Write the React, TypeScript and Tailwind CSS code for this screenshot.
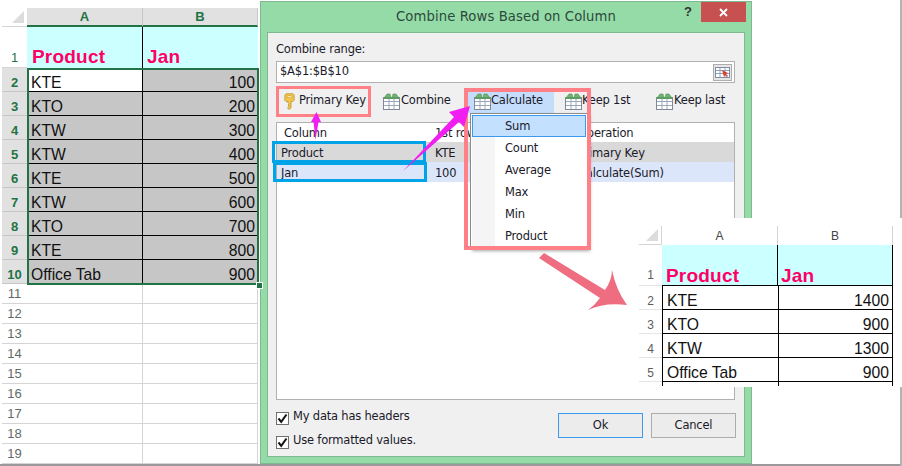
import { Fragment } from "react"

const uiFont = "font-['DejaVu_Sans',sans-serif] text-[11.5px] tracking-[-0.2px] whitespace-nowrap text-[#1a1a2a]"
const cellFont = "font-['Liberation_Sans',sans-serif] text-[15.700px] text-[#111]"
const headFont = "font-['Liberation_Sans',sans-serif] text-[19px] tracking-[0.2px] font-bold leading-none text-[#ff0066]"

const leftRows = [
  ["KTE", "100"],
  ["KTO", "200"],
  ["KTW", "300"],
  ["KTW", "400"],
  ["KTE", "500"],
  ["KTW", "600"],
  ["KTO", "700"],
  ["KTE", "800"],
  ["Office Tab", "900"],
]

const resultRows = [
  ["KTE", "1400"],
  ["KTO", "900"],
  ["KTW", "1300"],
  ["Office Tab", "900"],
]

const TableIcon = () => (
  <svg width="17" height="17" viewBox="0 0 17 17" className="shrink-0">
    <rect x="0.5" y="4.5" width="16" height="12" fill="#fff" stroke="#7d8a9c" />
    <path d="M1 8.5h15M1 12.5h15M6 5v11M11 5v11" stroke="#9aa8ba" fill="none" />
    <path d="M1 5 4 1h3l1 4zM9 5l1-4h3l3 4z" fill="#6fb46f" stroke="#4d8f55" strokeWidth="0.6" />
    <rect x="1" y="4" width="15" height="2" fill="#5d9c62" />
  </svg>
)

const KeyIcon = () => (
  <svg width="11" height="17" viewBox="0 0 13 22" className="shrink-0">
    <path
      d="M2 1h9l1.5 1.5v7L11 11H8.5v8L6 21.5 4.5 20v-1.5L6 17l-1.5-1.5L6 14l-1.5-1.5V11H2L.5 9.500v-7z"
      fill="#f3c64a"
      stroke="#b9902c"
    />
    <rect x="3.500" y="3.500" width="6" height="2.500" rx="1" fill="#fff3c0" stroke="#b9902c" strokeWidth="0.7" />
  </svg>
)

const Check = () => (
  <span className="w-[13px] h-[13px] border border-[#707070] bg-white flex items-center justify-center">
    <svg width="11" height="11" viewBox="0 0 11 11">
      <path d="M1.500 5.500 4.200 8.800 9.500 1.500" fill="none" stroke="#111" strokeWidth="2" />
    </svg>
  </span>
)

const Corner = () => (
  <div className="w-full h-full flex items-end justify-end pr-[3px] pb-[3px]">
    <div className="w-[12px] h-[12px] bg-[#dcdcdc] [clip-path:polygon(100%_0,100%_100%,0_100%)]" />
  </div>
)

function LeftSheet() {
  const colHead = "flex items-center justify-center bg-[#e1e1e1] border-r border-[#c6c6c6] font-['Liberation_Sans',sans-serif] text-[13px] font-bold text-[#217346]"
  const rowHead = "flex items-center justify-center pt-[6px] bg-[#e1e1e1] border-b border-[#c6c6c6] font-['Liberation_Sans',sans-serif] text-[13px] font-bold text-[#217346]"
  const plainHead = "flex items-center justify-center bg-white border-b border-[#d4d4d4] font-['Liberation_Sans',sans-serif] text-[13px] text-[#5f6b66]"
  return (
    <div className="w-[258px] pl-[2px] pt-[8px] shrink-0 h-[456px] relative">
      <div className="grid grid-cols-[25px_116px_115px] grid-rows-[19px_41px_repeat(9,24px)_repeat(9,20px)]">
        <div className="border-b border-[#d4d4d4]">
          <Corner />
        </div>
        <div className={colHead + " border-b-2 border-b-[#217346]"}>A</div>
        <div className={colHead + " border-b-2 border-b-[#217346]"}>B</div>

        <div className="flex items-end justify-center font-['Liberation_Sans',sans-serif] text-[13px] text-[#217346] border-b border-[#d4d4d4]">1</div>
        <div className={`bg-[#ccffff] border-r border-black flex items-end pl-[5px] pb-[2px] ${headFont}`}>Product</div>
        <div className={`bg-[#ccffff] flex items-end pl-[4px] pb-[2px] ${headFont}`}>Jan</div>

        {leftRows.map((row, i) => (
          <Fragment key={i}>
            <div className={rowHead}>{i + 2}</div>
            <div className={`${cellFont} ${i === 0 ? "bg-white" : "bg-[#c6c6c6]"} border-b border-r border-black flex items-center pl-[4px] pt-[7px]`}>{row[0]}</div>
            <div className={`${cellFont} bg-[#c6c6c6] border-b border-black flex items-center justify-end pr-[3px] pt-[7px]`}>{row[1]}</div>
          </Fragment>
        ))}

        {[11, 12, 13, 14, 15, 16, 17, 18, 19].map((n) => (
          <Fragment key={n}>
            <div className={plainHead}>{n}</div>
            <div className="border-b border-r border-[#d4d4d4]" />
            <div className="border-b border-r border-[#d4d4d4]" />
          </Fragment>
        ))}
      </div>
      <div className="absolute left-[27px] top-[68px] w-[232px] h-[217px] border-2 border-[#217346]" />
      <div className="absolute left-[256px] top-[282px] w-[5px] h-[5px] bg-[#217346] border border-white box-content" />
    </div>
  )
}

function ToolButton({ label, className }: { label: string; className: string }) {
  return (
    <div className={`flex items-center ${className}`}>
      <TableIcon />
      <span className={uiFont}>{label}</span>
    </div>
  )
}

function Dialog() {
  const listRow = "grid grid-cols-[151px_146px_1fr] items-center"
  return (
    <div className="ml-[2px] w-[492px] h-[463px] mt-[1px] bg-[#94dba7] border border-[#7fb98f] shrink-0 flex flex-col px-[6px] pb-[6px]">
      <div className="h-[30px] shrink-0 flex items-center relative">
        <span className="w-full text-center font-['DejaVu_Sans',sans-serif] text-[13.200px] text-[#2c4a3a] tracking-[0.1px]">Combine Rows Based on Column</span>
        <span className="absolute left-[417px] top-[0px] font-['Liberation_Sans',sans-serif] text-[13px] font-bold text-[#333]">?</span>
        <div className="absolute left-[434px] top-[0px] w-[45px] h-[20px] bg-[#c75050] flex items-center justify-center">
          <svg width="9" height="9" viewBox="0 0 9 9">
            <path d="M1 1 8 8M8 1 1 8" stroke="#fff" strokeWidth="1.800" />
          </svg>
        </div>
      </div>

      <div className="flex-1 bg-[#f0f0f0] border border-[#7fb98f] pl-[8px] pr-[9px] pt-[9px] flex flex-col">
        <div className={`${uiFont} leading-[14px] mb-[5px]`}>Combine range:</div>
        <div className="h-[22px] border border-[#b0b0b0] bg-white flex items-center justify-between pl-[3px] pr-[2px]">
          <span className={uiFont}>$A$1:$B$10</span>
          <div className="w-[19px] h-[17px] border border-[#adadad] bg-[#e6e6e6] flex items-center justify-center">
            <svg width="15" height="11" viewBox="0 0 15 11">
              <rect x="0.500" y="0.500" width="14" height="10" fill="#fff" stroke="#7d8fa5" />
              <path d="M1 3.500h13M1 6.500h13M5 1v9M10 1v9" stroke="#8da2bb" fill="none" />
              <path d="M7 3l6 3-2 1 2 2-1 1-2-2-1 2z" fill="#d8402c" />
            </svg>
          </div>
        </div>

        <div className="h-[36px] mb-[3px] shrink-0 flex items-center">
          <div className="w-[93px] flex items-center pl-[8px] gap-[4px]">
            <KeyIcon />
            <span className={uiFont}>Primary Key</span>
          </div>
          <ToolButton label="Combine" className="ml-[14px] w-[84px] gap-[1px]" />
          <div className="w-[87px] h-[23px] bg-[#c4ddfc] flex items-center pl-[7px]">
            <TableIcon />
            <span className={uiFont}>Calculate</span>
          </div>
          <ToolButton label="Keep 1st" className="ml-[11px] w-[91px]" />
          <ToolButton label="Keep last" className="gap-[1px]" />
        </div>

        <div className="h-[278px] border border-[#b0b0b0] bg-white">
          <div className={`h-[19px] pt-[2px] ${listRow}`}>
            <span className={`${uiFont} pl-[7px]`}>Column</span>
            <span className={`${uiFont} pl-[7px]`}>1st row</span>
            <span className={`${uiFont} pl-[4px]`}>Operation</span>
          </div>
          <div className={`h-[20px] pt-[3px] bg-[#d9d9d9] ${listRow}`}>
            <span className={`${uiFont} pl-[4px]`}>Product</span>
            <span className={`${uiFont} pl-[7px]`}>KTE</span>
            <span className={`${uiFont} pl-[4px]`}>Primary Key</span>
          </div>
          <div className={`h-[20px] pt-[3px] bg-[#dce6fa] ${listRow}`}>
            <span className={`${uiFont} pl-[4px]`}>Jan</span>
            <span className={`${uiFont} pl-[7px]`}>100</span>
            <span className={`${uiFont} pl-[4px]`}>Calculate(Sum)</span>
          </div>
        </div>

        <div className="flex-1 flex items-start justify-between pt-[12px]">
          <div className="flex flex-col gap-[11px]">
            <label className="flex items-center gap-[4px] h-[13px]">
              <Check />
              <span className={`${uiFont} mb-[3px]`}>My data has headers</span>
            </label>
            <label className="flex items-center gap-[4px] h-[13px]">
              <Check />
              <span className={`${uiFont} mb-[3px]`}>Use formatted values.</span>
            </label>
          </div>
          <div className="flex gap-[8px] mt-[1px] -mr-[1px]">
            <div className={`${uiFont} w-[85px] h-[25px] border border-[#3c99f0] bg-[#ececec] flex items-center justify-center`}>Ok</div>
            <div className={`${uiFont} w-[85px] h-[25px] border border-[#adadad] bg-[#ececec] flex items-center justify-center`}>Cancel</div>
          </div>
        </div>
      </div>
    </div>
  )
}

function CalculateMenu() {
  const items = ["Count", "Average", "Max", "Min", "Product"]
  return (
    <div className="absolute left-[470px] top-[113px] w-[118px] h-[136px] border border-[#8a8a8a] bg-white shadow-[2px_2px_3px_rgba(0,0,0,0.35)] flex flex-col p-[1px]">
      <div className="absolute left-[1px] top-[1px] bottom-[1px] w-[23px] bg-[#f5f5f5]" />
      <div className={`${uiFont} relative h-[22px] shrink-0 bg-[#c4e0ff] border border-[#3c99f0] flex items-center pl-[32px] pt-[1px]`}>Sum</div>
      {items.map((item) => (
        <div key={item} className={`${uiFont} relative h-[22px] shrink-0 flex items-center pl-[33px] pt-[2px]`}>{item}</div>
      ))}
    </div>
  )
}

function ResultSheet() {
  const head = "flex items-center justify-center border-r border-[#d4d4d4] font-['Liberation_Sans',sans-serif] text-[12px] text-[#444]"
  const rowNum = "flex items-center justify-center pt-[6px] border-b border-[#e4e4e4] font-['Liberation_Sans',sans-serif] text-[12px] text-[#5c5c5c]"
  return (
    <div className="absolute left-[639px] top-[226px] w-[263px] h-[161px] bg-white shadow-[0_-8px_0_#fff]">
      <div className="grid grid-cols-[23px_116px_115px] grid-rows-[19px_41px_repeat(4,24px)_4px]">
        <div className="border-b border-r border-[#d4d4d4]">
          <Corner />
        </div>
        <div className={head}>A</div>
        <div className={head}>B</div>
        <div className="flex items-end justify-center pb-[1px] font-['Liberation_Sans',sans-serif] text-[12px] text-[#5c5c5c] border-b border-[#e4e4e4]">1</div>
        <div className={`bg-[#ccffff] border-b border-r border-black flex items-end pl-[4px] ${headFont}`}>Product</div>
        <div className={`bg-[#ccffff] border-b border-r border-black flex items-end pl-[3px] ${headFont}`}>Jan</div>
        {resultRows.map((row, i) => (
          <Fragment key={i}>
            <div className={rowNum}>{i + 2}</div>
            <div className={`${cellFont} border-l border-b border-black flex items-center pl-[4px] pt-[7px]`}>{row[0]}</div>
            <div className={`${cellFont} border-l border-r border-b border-black flex items-center justify-end pr-[3px] pt-[7px]`}>{row[1]}</div>
          </Fragment>
        ))}
        <div />
        <div className="border-l border-black" />
        <div className="border-l border-r border-black" />
      </div>
    </div>
  )
}

export default function App() {
  return (
    <div className="relative w-[902px] h-[466px] overflow-hidden bg-white">
      <div className="flex">
        <LeftSheet />
        <Dialog />
      </div>
      <div className="absolute left-0 right-0 bottom-0 h-[2px] bg-[#9a9a9a]" />
      <div className="absolute right-0 top-0 bottom-0 w-[2px] bg-[#b4b4b4]" />

      <CalculateMenu />
      <ResultSheet />

      {/* red and blue callouts drawn over the dialog */}
      <div className="absolute left-[276px] top-[86px] w-[95px] h-[31px] border-[3px] border-[#ff8087]" />
      <div className="absolute left-[464px] top-[88px] w-[127px] h-[162px] border-[4px] border-[#ff8087]" />
      <div className="absolute left-[272px] top-[141px] w-[154px] h-[22px] border-[3px] border-[#00a2e8]" />
      <div className="absolute left-[273px] top-[162px] w-[154px] h-[20px] border-[3px] border-[#00a2e8]" />

      <svg className="absolute left-0 top-0 pointer-events-none" width="902" height="466" viewBox="0 0 902 466">
        <path d="M315.500 140 313.500 122 311 122 316.500 112 321 122 318.500 122z" fill="#f01ef0" />
        <path d="M403 171 454 117 449 112 470 106 464 127 459 122z" fill="#f01ef0" />
        <path d="M539 258 544 253 605 290Q612 280 612 270 616 290 627 305 605 302 588 310 595 305 600 298z" fill="#ee6d80" />
      </svg>
    </div>
  )
}
